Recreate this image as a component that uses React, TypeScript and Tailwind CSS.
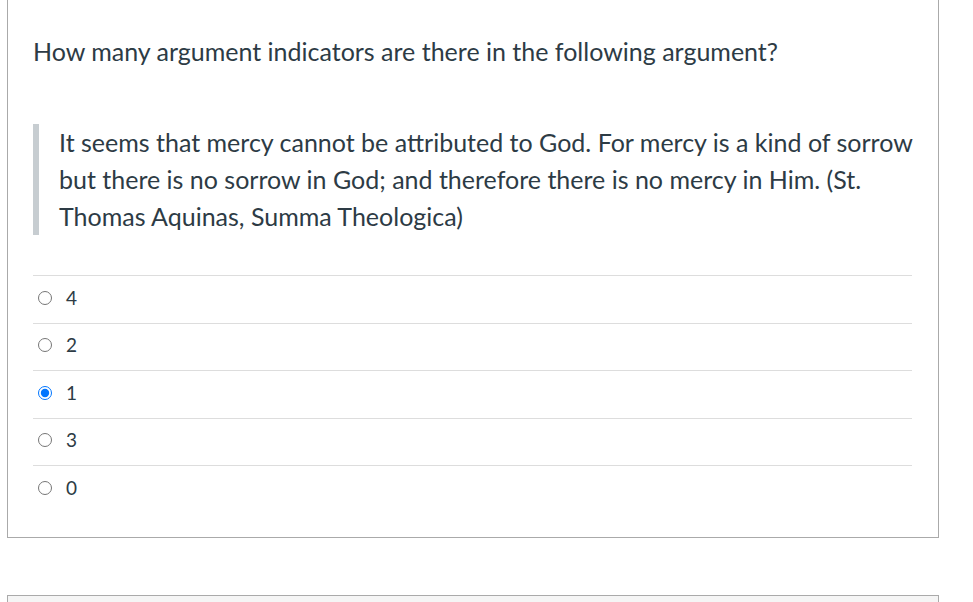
const options = [
  { id: 'a', label: '4' },
  { id: 'b', label: '2' },
  { id: 'c', label: '1', checked: true },
  { id: 'd', label: '3' },
  { id: 'e', label: '0' },
];

export default function App() {
  return (
    <div className="min-h-[602px] bg-white font-['Lato','Noto_Sans',sans-serif] text-[#2d3b45]">
      <div className="ml-[7px] w-[932px] border-x border-b border-[#aaaaaa] px-[25px] pb-[24px] pt-[33px]">
        <p className="text-[25px] leading-[36px]">
          How many argument indicators are there in the following argument?
        </p>

        <blockquote className="mt-[55px] border-l-[6px] border-[#c7cdd1] pl-[20px]">
          <p className="text-[25px] leading-[37px]">
            It seems that mercy cannot be attributed to God. For mercy is a kind of sorrow but there is no sorrow in
            God; and therefore there is no mercy in Him. (St. Thomas Aquinas, Summa Theologica)
          </p>
        </blockquote>

        <div className="mt-[40px] w-[879px]">
          {options.map((o) => (
            <label
              key={o.id}
              className="flex h-[47.5px] items-center gap-[14px] border-t border-[#dddddd] pb-[3px] text-[19px]"
            >
              <input
                type="radio"
                name="q1"
                defaultChecked={o.checked}
                className="m-0 ml-[5px] h-[14px] w-[14px]"
              />
              <span>{o.label}</span>
            </label>
          ))}
        </div>
      </div>

      <div className="ml-[7px] mt-[57px] h-[20px] w-[932px] border border-[#aaaaaa] bg-[#f5f5f5]" />
    </div>
  );
}
